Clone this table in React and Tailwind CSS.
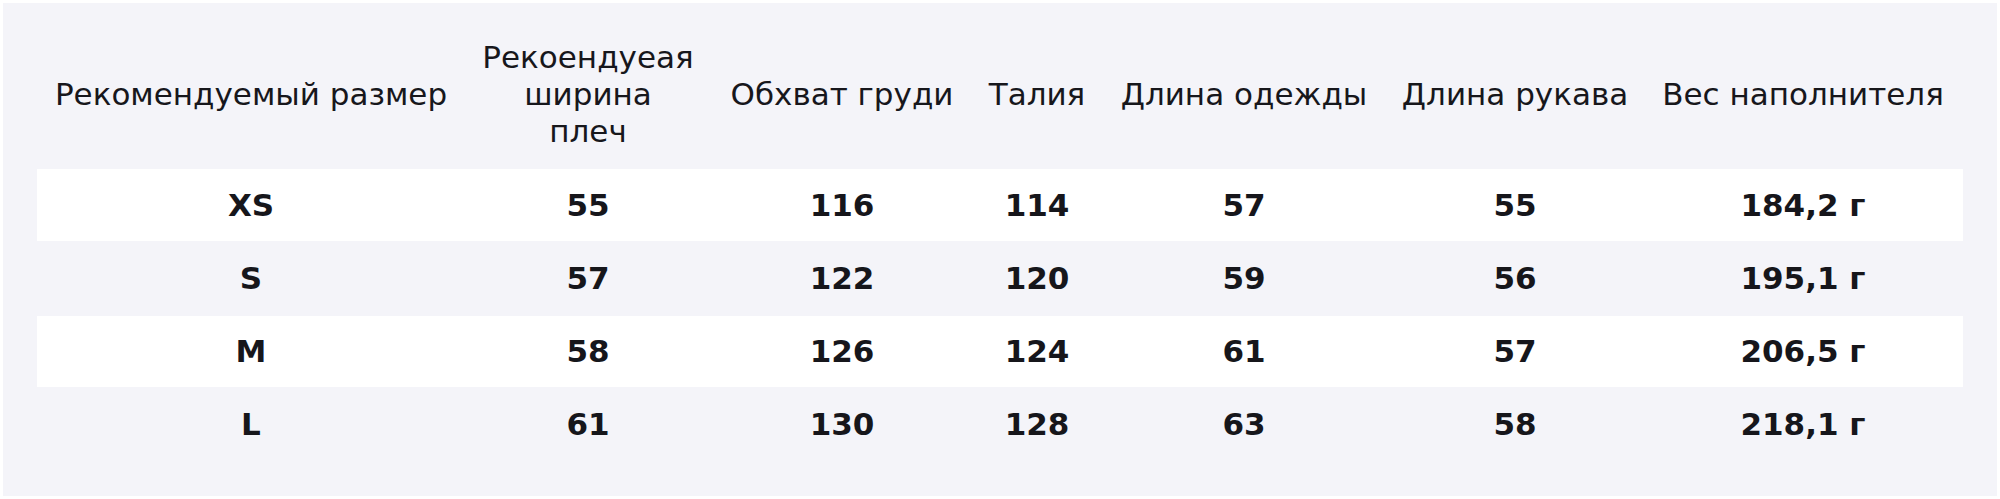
export default function App() {
  const headers = [
    "Рекомендуемый размер",
    "Рекоендуеая ширина плеч",
    "Обхват груди",
    "Талия",
    "Длина одежды",
    "Длина рукава",
    "Вес наполнителя",
  ];
  const rows = [
    ["XS", "55", "116", "114", "57", "55", "184,2 г"],
    ["S", "57", "122", "120", "59", "56", "195,1 г"],
    ["M", "58", "126", "124", "61", "57", "206,5 г"],
    ["L", "61", "130", "128", "63", "58", "218,1 г"],
  ];
  const widths = ["w-[428px]", "w-[246px]", "w-[262px]", "w-[128px]", "w-[286px]", "w-[256px]", "w-[320px]"];
  const pads = ["px-4", "px-4", "px-4", "px-3", "px-4", "px-3", "px-4"];
  return (
    <div className="bg-white w-[2000px] h-[499px] p-[3px]" style={{ fontFamily: '"DejaVu Sans", Verdana, sans-serif' }}>
      <div className="bg-[#f4f4f9] h-[493px] px-[34px] pt-[16px] pb-[35px]">
        <table className="table-fixed w-[1926px] border-collapse">
          <colgroup>
            {widths.map((w, i) => (
              <col key={i} className={w} />
            ))}
          </colgroup>
          <thead>
            <tr className="h-[150px]">
              {headers.map((h, i) => (
                <th key={i} className={`${pads[i]} text-center align-middle font-normal text-[31px] leading-[37px] text-[#17171c]`}>
                  {h}
                </th>
              ))}
            </tr>
          </thead>
          <tbody>
            {rows.map((r, ri) => (
              <tr key={ri} className={ri % 2 === 0 ? "h-[73px] bg-white border-b-2 border-[#f4f4f9]" : "h-[73px] border-b-2 border-[#f4f4f9]"}>
                {r.map((c, ci) => (
                  <td key={ci} className={`${pads[ci]} text-center align-middle font-bold text-[31px] leading-[37px] text-[#16161b]`}>
                    {c}
                  </td>
                ))}
              </tr>
            ))}
          </tbody>
        </table>
      </div>
    </div>
  );
}
